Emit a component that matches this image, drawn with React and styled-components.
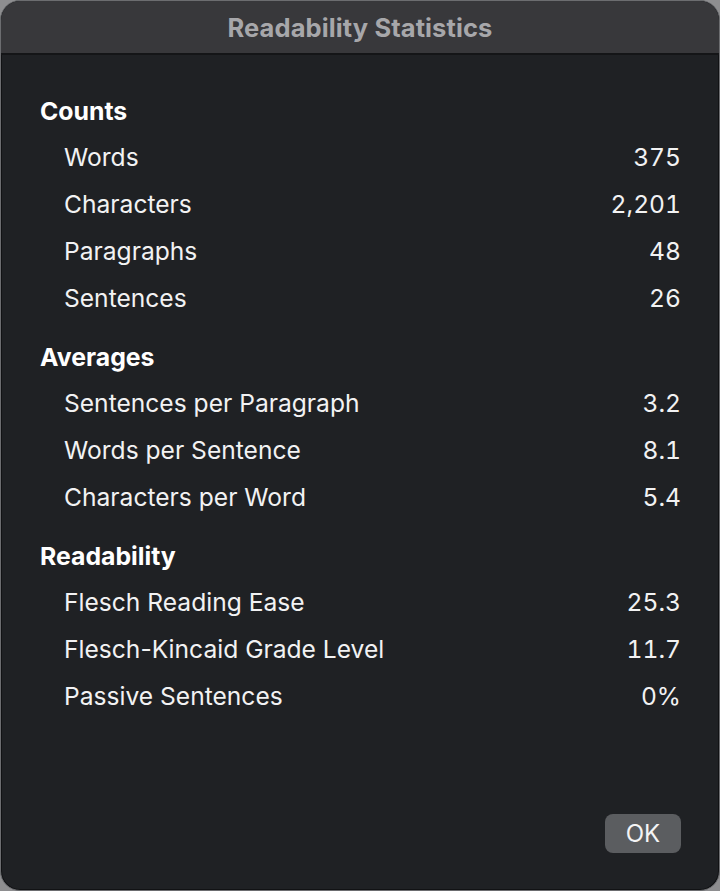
import React from "react";
import styled, { createGlobalStyle } from "styled-components";

const Global = createGlobalStyle`
  html, body { margin: 0; padding: 0; background: #8e8e90; }
  body { font-family: Inter, "Liberation Sans", Arial, sans-serif; -webkit-font-smoothing: antialiased; }
`;

const Window = styled.div`
  width: 720px;
  height: 891px;
  box-sizing: border-box;
  background: #1f2124;
  border: 1.5px solid #6c6d70;
  border-radius: 20px;
  overflow: hidden;
  display: flex;
  flex-direction: column;
  box-shadow: inset 0 0 0 1px #111214;
`;

const TitleBar = styled.div`
  height: 52px;
  flex: none;
  background: #38383b;
  border-bottom: 2px solid #141517;
  display: flex;
  align-items: center;
  justify-content: center;
  color: #a7a7aa;
  font-size: 25.5px;
  font-weight: 700;
  letter-spacing: 0.1px;
`;

const Body = styled.div`
  flex: 1;
  display: flex;
  flex-direction: column;
  padding: 34px 38px 37px 39px;
`;

const Section = styled.section`
  display: flex;
  flex-direction: column;
  margin-bottom: 14px;
`;

const Heading = styled.h2`
  margin: 0;
  height: 44px;
  display: flex;
  align-items: center;
  color: #ffffff;
  font-size: 24.8px;
  font-weight: 700;
`;

const Row = styled.div`
  height: 47px;
  display: flex;
  align-items: center;
  justify-content: space-between;
  padding-left: 24px;
  color: #f2f2f3;
  font-size: 24.6px;
  font-weight: 400;
`;

const Value = styled.span`
  font-variant-numeric: tabular-nums;
`;

const Footer = styled.div`
  margin-top: auto;
  display: flex;
  justify-content: flex-end;
`;

const OkButton = styled.button`
  width: 76px;
  height: 39px;
  border: none;
  border-radius: 8px;
  background: #5b5d60;
  color: #f4f4f5;
  font-family: inherit;
  font-size: 24px;
  font-weight: 400;
  padding: 0;
`;

const sections = [
  {
    title: "Counts",
    rows: [
      ["Words", "375"],
      ["Characters", "2,201"],
      ["Paragraphs", "48"],
      ["Sentences", "26"],
    ],
  },
  {
    title: "Averages",
    rows: [
      ["Sentences per Paragraph", "3.2"],
      ["Words per Sentence", "8.1"],
      ["Characters per Word", "5.4"],
    ],
  },
  {
    title: "Readability",
    rows: [
      ["Flesch Reading Ease", "25.3"],
      ["Flesch-Kincaid Grade Level", "11.7"],
      ["Passive Sentences", "0%"],
    ],
  },
];

export default function App() {
  return (
    <>
      <Global />
      <Window>
        <TitleBar>Readability Statistics</TitleBar>
        <Body>
          {sections.map((s) => (
            <Section key={s.title}>
              <Heading>{s.title}</Heading>
              {s.rows.map(([label, value]) => (
                <Row key={label}>
                  <span>{label}</span>
                  <Value>{value}</Value>
                </Row>
              ))}
            </Section>
          ))}
          <Footer>
            <OkButton>OK</OkButton>
          </Footer>
        </Body>
      </Window>
    </>
  );
}
